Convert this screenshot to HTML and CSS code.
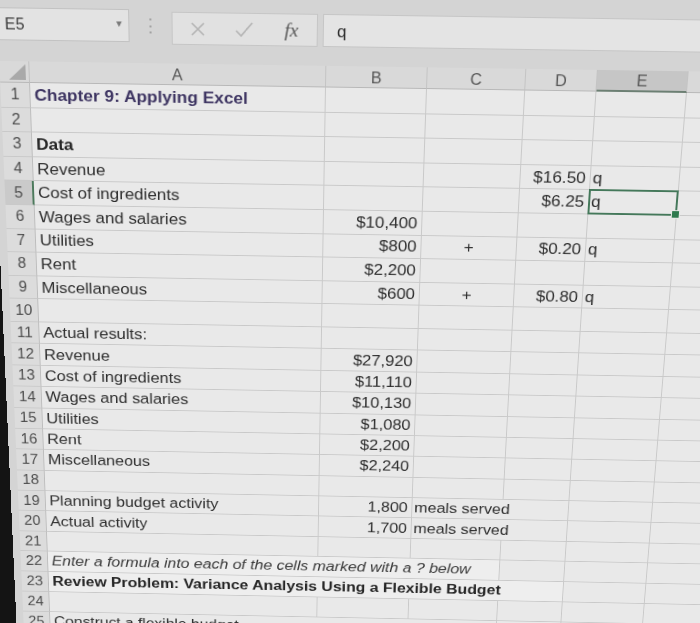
FILE: index.html
```html
<!DOCTYPE html>
<html>
<head>
<meta charset="utf-8">
<link rel="stylesheet" href="styles.css">
</head>
<body>
<div class="screen">
  <div class="toolbar">
    <div class="namebox"><span class="name">E5</span><span class="caret">&#9662;</span></div>
    <div class="grip">&#8942;</div>
    <div class="fbtns">
      <svg class="ic" width="20" height="20" viewBox="0 0 20 20"><path d="M4 4 L16 16 M16 4 L4 16" stroke="#b4b4b4" stroke-width="1.6" fill="none"/></svg>
      <svg class="ic" width="22" height="20" viewBox="0 0 22 20"><path d="M3 11 L8 16 L19 3" stroke="#b4b4b4" stroke-width="1.6" fill="none"/></svg>
      <span class="fx">fx</span>
    </div>
    <div class="formula">q</div>
  </div>
  <div class="sheet">
    <div class="corner"></div><div class="ch">A</div><div class="ch">B</div><div class="ch">C</div><div class="ch">D</div><div class="ch sel-col">E</div><div class="ch"></div>

    <div class="rh">1</div><div class="c title">Chapter 9: Applying Excel</div><div class="c"></div><div class="c"></div><div class="c"></div><div class="c"></div><div class="c"></div>
    <div class="rh">2</div><div class="c"></div><div class="c"></div><div class="c"></div><div class="c"></div><div class="c"></div><div class="c"></div>
    <div class="rh">3</div><div class="c b">Data</div><div class="c"></div><div class="c"></div><div class="c"></div><div class="c"></div><div class="c"></div>
    <div class="rh">4</div><div class="c">Revenue</div><div class="c"></div><div class="c"></div><div class="c r">$16.50</div><div class="c q">q</div><div class="c"></div>
    <div class="rh sel-row">5</div><div class="c">Cost of ingredients</div><div class="c"></div><div class="c"></div><div class="c r">$6.25</div><div class="c q sel">q</div><div class="c"></div>
    <div class="rh">6</div><div class="c">Wages and salaries</div><div class="c r">$10,400</div><div class="c"></div><div class="c"></div><div class="c"></div><div class="c"></div>
    <div class="rh">7</div><div class="c">Utilities</div><div class="c r">$800</div><div class="c m">+</div><div class="c r">$0.20</div><div class="c q">q</div><div class="c"></div>
    <div class="rh">8</div><div class="c">Rent</div><div class="c r">$2,200</div><div class="c"></div><div class="c"></div><div class="c"></div><div class="c"></div>
    <div class="rh">9</div><div class="c">Miscellaneous</div><div class="c r">$600</div><div class="c m">+</div><div class="c r">$0.80</div><div class="c q">q</div><div class="c"></div>
    <div class="rh">10</div><div class="c"></div><div class="c"></div><div class="c"></div><div class="c"></div><div class="c"></div><div class="c"></div>
    <div class="rh">11</div><div class="c">Actual results:</div><div class="c"></div><div class="c"></div><div class="c"></div><div class="c"></div><div class="c"></div>
    <div class="rh">12</div><div class="c">Revenue</div><div class="c r">$27,920</div><div class="c"></div><div class="c"></div><div class="c"></div><div class="c"></div>
    <div class="rh">13</div><div class="c">Cost of ingredients</div><div class="c r">$11,110</div><div class="c"></div><div class="c"></div><div class="c"></div><div class="c"></div>
    <div class="rh">14</div><div class="c">Wages and salaries</div><div class="c r">$10,130</div><div class="c"></div><div class="c"></div><div class="c"></div><div class="c"></div>
    <div class="rh">15</div><div class="c">Utilities</div><div class="c r">$1,080</div><div class="c"></div><div class="c"></div><div class="c"></div><div class="c"></div>
    <div class="rh">16</div><div class="c">Rent</div><div class="c r">$2,200</div><div class="c"></div><div class="c"></div><div class="c"></div><div class="c"></div>
    <div class="rh">17</div><div class="c">Miscellaneous</div><div class="c r">$2,240</div><div class="c"></div><div class="c"></div><div class="c"></div><div class="c"></div>
    <div class="rh">18</div><div class="c"></div><div class="c"></div><div class="c"></div><div class="c"></div><div class="c"></div><div class="c"></div>
    <div class="rh">19</div><div class="c">Planning budget activity</div><div class="c r">1,800</div><div class="c q span2">meals served</div><div class="c"></div><div class="c"></div>
    <div class="rh">20</div><div class="c">Actual activity</div><div class="c r">1,700</div><div class="c q span2">meals served</div><div class="c"></div><div class="c"></div>
    <div class="rh">21</div><div class="c"></div><div class="c"></div><div class="c"></div><div class="c"></div><div class="c"></div><div class="c"></div>
    <div class="rh">22</div><div class="c i span3 lite">Enter a formula into each of the cells marked with a ? below</div><div class="c"></div><div class="c"></div><div class="c"></div>
    <div class="rh">23</div><div class="c b span4 lite">Review Problem: Variance Analysis Using a Flexible Budget</div><div class="c"></div><div class="c"></div>
    <div class="rh">24</div><div class="c"></div><div class="c"></div><div class="c"></div><div class="c"></div><div class="c"></div><div class="c"></div>
    <div class="rh">25</div><div class="c span3">Construct a flexible budget</div><div class="c"></div><div class="c"></div><div class="c"></div>
    <div class="rh">26</div><div class="c"></div><div class="c"></div><div class="c"></div><div class="c"></div><div class="c"></div><div class="c"></div>
    <div class="rh">27</div><div class="c"></div><div class="c"></div><div class="c"></div><div class="c"></div><div class="c"></div><div class="c"></div>
  </div>
</div>
</body>
</html>
```

FILE: styles.css
```css
* { box-sizing: border-box; }
html, body {
  margin: 0;
  padding: 0;
  width: 700px;
  height: 623px;
  overflow: hidden;
  background: #141414;
}
.screen {
  width: 890px;
  height: 760px;
  background: #d4d4d4;
  box-shadow: -8px -40px 0 #d4d4d4;
  transform-origin: 0 0;
  transform: matrix3d(1.008055, 0.014565, 0, -0.00000955, 0.042906, 1.007463, 0, 0.00018173, 0, 0, 1, 0, -3.32145, 0.14955, 0, 1);
  font-family: "Liberation Sans", Arial, sans-serif;
  color: #2e2e2e;
}
.toolbar {
  height: 61px;
  display: flex;
  align-items: flex-start;
  padding-top: 7px;
}
.namebox {
  width: 131px;
  height: 33px;
  background: #e3e3e3;
  border: 1px solid #c2c2c2;
  border-left: none;
  display: flex;
  align-items: center;
  justify-content: space-between;
  padding: 0 6px 0 7px;
}
.name { font-size: 16px; color: #3c3c3c; }
.caret { font-size: 11px; color: #7a7a7a; margin-top: -4px; }
.grip {
  width: 42px;
  text-align: center;
  font-size: 18px;
  color: #a0a0a0;
  line-height: 33px;
}
.fbtns {
  width: 145px;
  height: 33px;
  margin-top: 2px;
  background: #e1e1e1;
  border: 1px solid #c6c6c6;
  display: flex;
  align-items: center;
  padding-left: 15px;
  gap: 25px;
}
.ic { display: block; }
.fx {
  font-family: "Liberation Serif", "Times New Roman", serif;
  font-style: italic;
  font-size: 19px;
  color: #555;
  margin-left: 4px;
}
.formula {
  flex: 1;
  height: 33px;
  margin-top: 2px;
  margin-left: 5px;
  background: #e4e4e4;
  border: 1px solid #c6c6c6;
  font-size: 17px;
  padding: 7px 0 0 13px;
}
.sheet {
  display: grid;
  grid-template-columns: 30px 297px 101px 98px 71px 90px 203px;
  grid-template-rows: 22px repeat(10, 25.6px) repeat(12, 24.4px) repeat(5, 25px);
  background: #e9e9e9;
}
.corner {
  background: #d9d9d9;
  border-right: 1px solid #c2c2c2;
  border-bottom: 1px solid #b8b8b8;
  position: relative;
}
.corner::after {
  content: "";
  position: absolute;
  right: 3px;
  bottom: 2px;
  width: 17px;
  height: 16px;
  background: #a9a9a9;
  clip-path: polygon(100% 0, 100% 100%, 0 100%);
}
.ch {
  background: #d9d9d9;
  border-right: 1px solid #c4c4c4;
  border-bottom: 1px solid #b8b8b8;
  display: flex;
  align-items: center;
  justify-content: center;
  font-size: 16px;
  color: #555;
  padding-top: 2px;
}
.ch.sel-col {
  background: #c6c6c6;
  border-bottom: 2px solid #6c7f73;
}
.rh {
  background: #dcdcdc;
  border-right: 1px solid #bdbdbd;
  border-bottom: 1px solid #c9c9c9;
  display: flex;
  align-items: center;
  justify-content: center;
  font-size: 16px;
  color: #4e4e4e;
}
.rh.sel-row {
  background: #cacaca;
  border-right: 2px solid #4c7a5c;
}
.c {
  border-right: 1px solid #c9c9c9;
  border-bottom: 1px solid #c9c9c9;
  display: flex;
  align-items: center;
  padding: 0 4px;
  white-space: nowrap;
  font-size: 17.4px;
  color: #2e2e2e;
  overflow: visible;
}
.title { font-weight: bold; color: #3e3562; }
.b { font-weight: bold; color: #262626; }
.i { font-style: italic; color: #3a3a3a; }
.r { justify-content: flex-end; }
.m { justify-content: center; }
.q { padding-left: 2px; }
.span2 { grid-column: span 2; }
.span3 { grid-column: span 3; }
.span4 { grid-column: span 4; }
.lite { background: #eeeeee; }
.sel {
  position: relative;
}
.sel::after {
  content: "";
  position: absolute;
  left: -1px;
  top: -1px;
  right: -1px;
  bottom: -1px;
  border: 2px solid #44785a;
}
.sel::before {
  content: "";
  position: absolute;
  right: -4px;
  bottom: -4px;
  width: 7px;
  height: 7px;
  background: #2f7a4e;
  border: 1px solid #e9e9e9;
  z-index: 1;
}
```
